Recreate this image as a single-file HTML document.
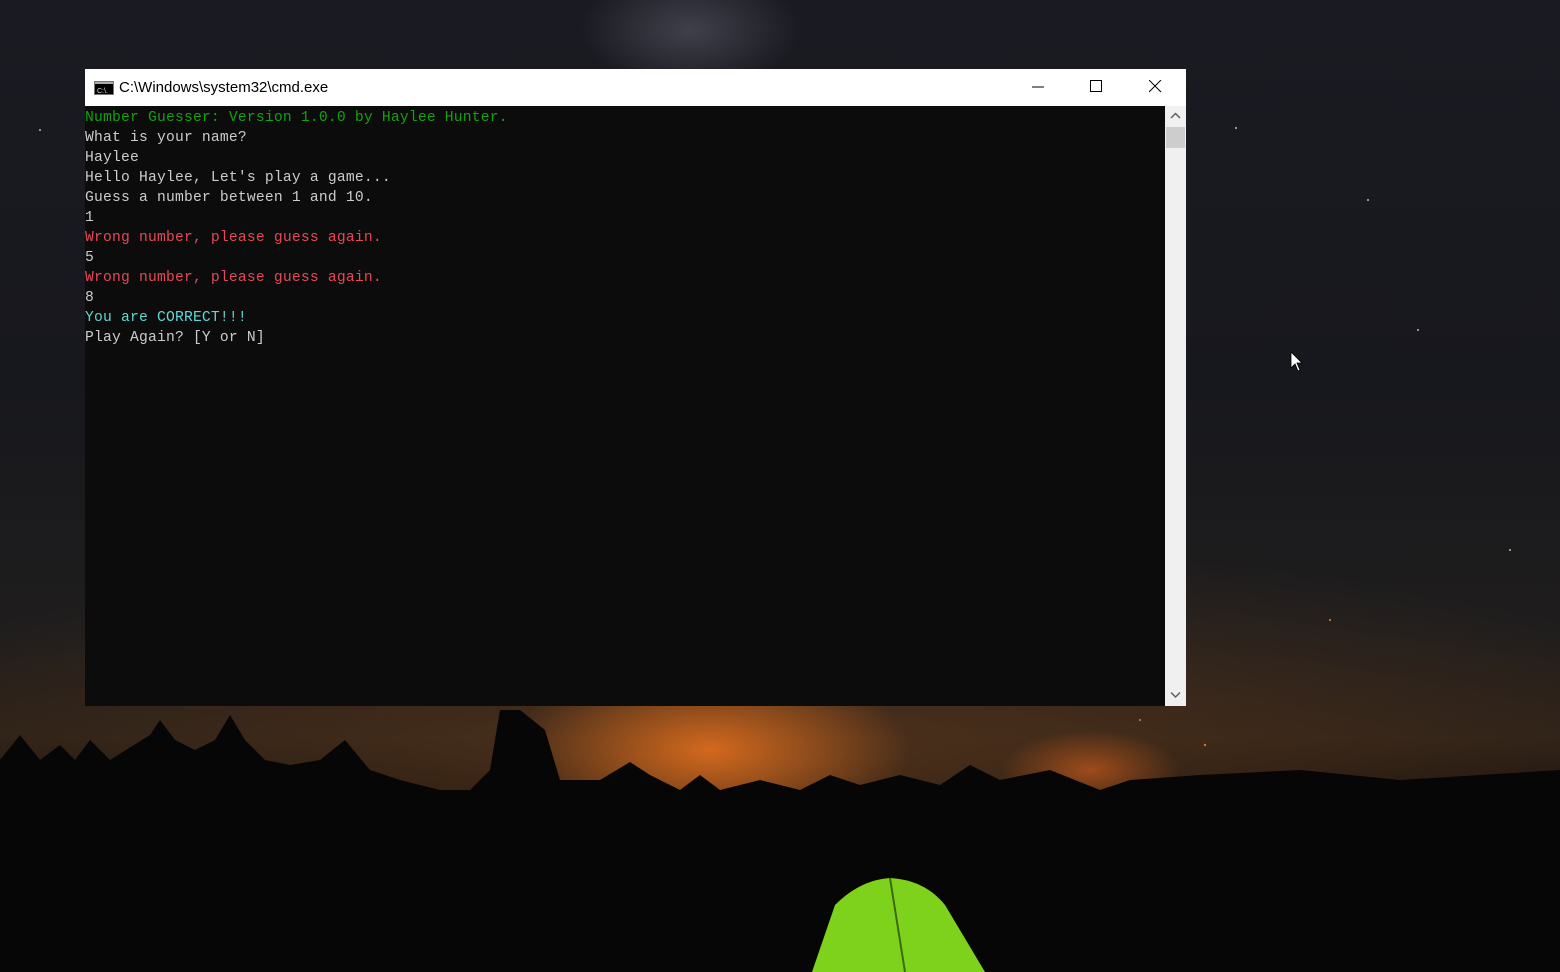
<!DOCTYPE html>
<html><head><meta charset="utf-8"><style>
html,body{margin:0;padding:0;width:1560px;height:972px;overflow:hidden;background:#101014;}
.bg{position:absolute;inset:0;background:
radial-gradient(ellipse 110px 60px at 690px 30px, rgba(120,120,135,0.4), transparent),
radial-gradient(ellipse 200px 90px at 710px 750px, rgba(235,115,30,0.85), transparent),
radial-gradient(ellipse 90px 40px at 1090px 770px, rgba(220,100,30,0.6), transparent),
radial-gradient(ellipse 1000px 220px at 780px 760px, rgba(90,55,28,0.75), transparent),
linear-gradient(#1a1b22 0%, #17181d 40%, #1f1d1d 65%, #2a2018 76%, #070605 86%, #030303 100%);}
.win{position:absolute;left:85px;top:69px;width:1101px;height:637px;}
.title{position:absolute;left:0;top:0;width:1101px;height:37px;background:#fff;font-family:"Liberation Sans",sans-serif;font-size:15px;color:#000;}
.title .t{position:absolute;left:34px;top:10px;}
.con{position:absolute;left:0;top:37px;width:1080px;height:600px;background:#0c0c0c;}
.sb{position:absolute;left:1080px;top:37px;width:21px;height:600px;background:#f0f0f0;}
pre{margin:0;position:absolute;left:0;top:2px;font-family:"Liberation Mono",monospace;font-size:14.67px;letter-spacing:0.2px;line-height:20px;color:#cccccc;}
.g{color:#13a10e}.r{color:#e74856}.c{color:#61d6d6}
</style></head><body>
<div class="bg"></div>
<svg width="1560" height="972" style="position:absolute;left:0;top:0">
<g fill="#bbb"><circle cx="1236" cy="128" r="1"/><circle cx="1368" cy="200" r="1"/><circle cx="1510" cy="550" r="1"/><circle cx="1330" cy="620" r="1" fill="#d84"/><circle cx="1205" cy="745" r="1.2" fill="#e63"/><circle cx="1140" cy="720" r="1" fill="#d84"/><circle cx="40" cy="130" r="1"/><circle cx="1418" cy="330" r="1"/></g>
<path d="M0 760 L20 735 L40 760 L60 745 L75 760 L90 740 L110 760 L150 735 L160 720 L175 740 L195 750 L215 740 L230 715 L245 740 L265 760 L290 765 L320 760 L345 740 L370 770 L400 780 L440 790 L470 790 L490 770 L500 710 L520 710 L545 730 L560 780 L600 780 L630 762 L650 775 L680 790 L700 775 L720 790 L760 780 L800 790 L830 775 L860 785 L880 780 L900 775 L940 785 L970 765 L1000 780 L1050 770 L1100 790 L1130 780 L1200 775 L1300 770 L1400 780 L1560 770 L1560 972 L0 972 Z" fill="#060606"/>
<path d="M812 972 L835 905 Q860 880 890 878 Q925 880 945 905 L985 972 Z" fill="#7fd21c"/>
<path d="M890 878 L905 972" stroke="#3c6a10" stroke-width="2" fill="none"/>
<path d="M1291 352 L1291 368 L1295 364 L1298 371 L1300 370 L1297 363 L1302 363 Z" fill="#fff" stroke="#000" stroke-width="0.8"/>
</svg>
<div class="win">
<div class="title">
<svg style="position:absolute;left:9px;top:12px" width="20" height="14"><rect x="0.5" y="0.5" width="19" height="13" fill="#000" stroke="#777"/><rect x="1" y="1" width="18" height="2" fill="#aaa"/><text x="3" y="12" font-size="7" fill="#ddd" font-family="Liberation Sans">C:\.</text></svg>
<span class="t">C:\Windows\system32\cmd.exe</span>
<svg style="position:absolute;left:947px;top:10px" width="20" height="16"><line x1="0" y1="8" x2="12" y2="8" stroke="#000"/></svg>
<svg style="position:absolute;left:1005px;top:11px" width="14" height="14"><rect x="0.5" y="0.5" width="11" height="11" fill="none" stroke="#000"/></svg>
<svg style="position:absolute;left:1064px;top:11px" width="14" height="14"><path d="M0 0 L12 12 M12 0 L0 12" stroke="#000"/></svg>
</div>
<div class="con"><pre><span class="g">Number Guesser: Version 1.0.0 by Haylee Hunter.</span>
What is your name?
Haylee
Hello Haylee, Let's play a game...
Guess a number between 1 and 10.
1
<span class="r">Wrong number, please guess again.</span>
5
<span class="r">Wrong number, please guess again.</span>
8
<span class="c">You are CORRECT!!!</span>
Play Again? [Y or N]</pre></div>
<div class="sb">
<svg style="position:absolute;left:5px;top:6px" width="12" height="8"><path d="M1 6 L5.5 1.5 L10 6" stroke="#606060" stroke-width="1.5" fill="none"/></svg>
<div style="position:absolute;left:1px;top:21px;width:19px;height:21px;background:#cdcdcd"></div>
<svg style="position:absolute;left:5px;top:585px" width="12" height="8"><path d="M1 1.5 L5.5 6 L10 1.5" stroke="#606060" stroke-width="1.5" fill="none"/></svg>
</div>
</div>
</body></html>
